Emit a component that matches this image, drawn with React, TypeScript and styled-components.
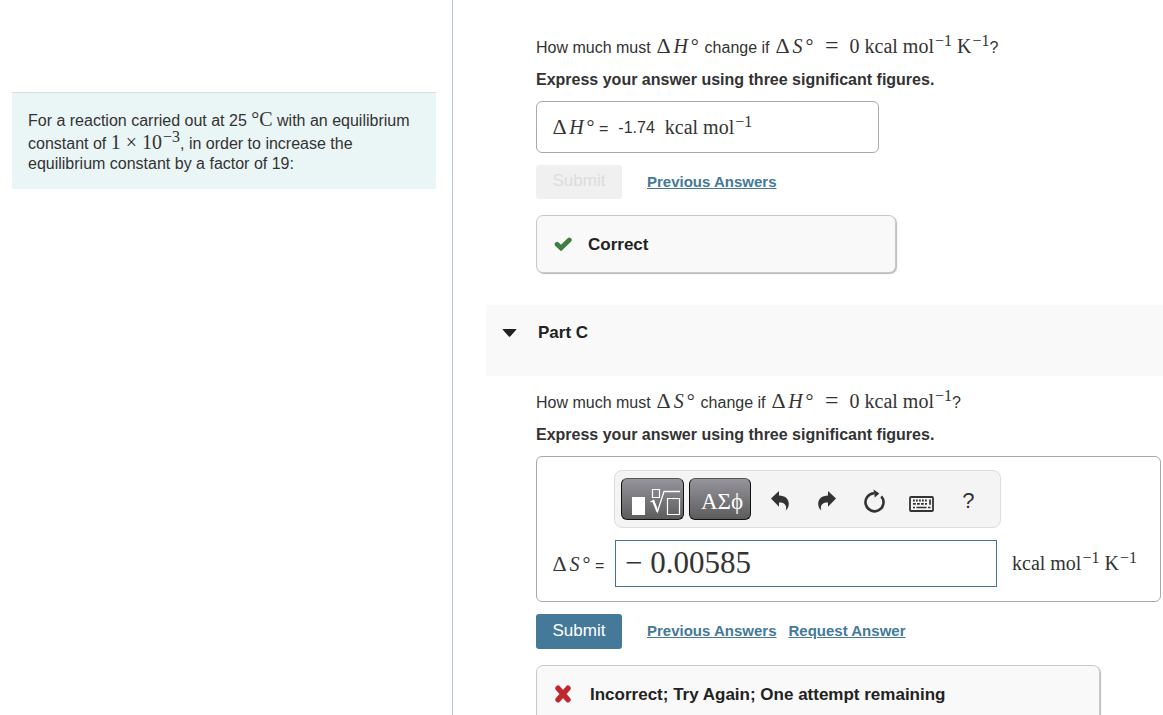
import React from "react";
import styled, { createGlobalStyle } from "styled-components";

const GlobalStyle = createGlobalStyle`
  *, *::before, *::after { box-sizing: border-box; }
  body {
    margin: 0;
    background: #fff;
    color: #333;
    font: 16px/19px "Liberation Sans", Arial, sans-serif;
  }
  p, h2 { margin: 0; }
`;

const serif = `"Liberation Serif", "Times New Roman", serif`;

const Page = styled.div`
  display: flex;
  height: 100vh;
  overflow: hidden;
`;

const ContextPane = styled.aside`
  flex: none;
  width: round(down, 39%, 1px);
  padding: 92px 16px 0 12px;
  border-right: 1px solid #b9cbe3;
`;

const ContextCard = styled.div`
  padding: 15px 16px 16px;
  border-top: 1px solid #d8dcdc;
  background: #eaf5f6;
`;

const WorkPane = styled.main`
  flex: 1;
  min-width: 0;
  padding-left: 33px;
  overflow-y: auto;
  scrollbar-width: none;
`;

const PartBody = styled.section<{ $top: number }>`
  padding: ${(p) => p.$top}px 2px 32px 50px;
`;

const Question = styled.p`
  line-height: 24px;
`;

const Instruction = styled.p`
  margin-top: 10px;
  font-weight: bold;
`;

const MathText = styled.span`
  font-family: ${serif};
  font-size: 20px;
  line-height: 23px;
  white-space: nowrap;
`;

const Symbol = styled.span<{ $width: number; $italic?: boolean }>`
  display: inline-block;
  width: ${(p) => p.$width}px;
  text-align: center;
  font-style: ${(p) => (p.$italic ? "italic" : "normal")};
`;

const Delta = styled(Symbol)`
  font-size: 22px;
`;

const Relation = styled.span`
  padding: 0 11px 0 10px;
  font-size: 24px;
  line-height: 0;
`;

const Power = styled.sup`
  padding-left: 1px;
  font-size: 16px;
  line-height: 0;
  vertical-align: 7px;
`;

const AnswerBox = styled.div`
  border: 1px solid #a9a9a9;
  border-radius: 6px;
  background: #fff;
`;

const GivenAnswer = styled(AnswerBox)`
  display: flex;
  align-items: center;
  max-width: 343px;
  height: 52px;
  margin-top: 12px;
  padding-left: 14px;
  gap: 10px;
`;

const Pair = styled.span`
  display: flex;
  align-items: baseline;
  gap: 3px;
`;

const EntryBox = styled(AnswerBox)`
  margin-top: 12px;
  padding: 13px 14px 14px;
`;

const Toolbar = styled.div`
  display: flex;
  align-items: center;
  width: 387px;
  height: 58px;
  margin-left: 63px;
  padding: 0 8px 0 6px;
  border: 1px solid #ddd;
  border-radius: 8px;
  background: #f4f4f4;
`;

const PaletteButton = styled.button<{ $width: number }>`
  display: flex;
  align-items: center;
  justify-content: flex-end;
  width: ${(p) => p.$width}px;
  height: 42px;
  margin-right: 5px;
  padding: 6px 2px 0 0;
  border: 1px solid #111;
  border-top-color: #555;
  border-radius: 6px;
  background: linear-gradient(#96949c, #5c5c5c);
  color: #fff;
  font: 23px/26px ${serif};
`;

const GreekButton = styled(PaletteButton)`
  padding-right: 7px;
`;

const ToolButton = styled.button`
  display: flex;
  align-items: center;
  justify-content: center;
  flex: 1 1 0;
  height: 42px;
  padding: 4px 0 0;
  border: 0;
  background: none;
  color: #333;
  font: 22px/24px "Liberation Sans", Arial, sans-serif;
`;

const EntryRow = styled.div`
  display: flex;
  align-items: center;
  margin-top: 12px;
`;

const EntryLabel = styled.label`
  display: flex;
  align-items: baseline;
  flex: none;
  width: 64px;
  gap: 3px;
`;

const EntryInput = styled.input`
  flex: 0 1 382px;
  min-width: 0;
  height: 47px;
  margin-right: 15px;
  padding: 0 9px 2px;
  border: 1px solid #3f7698;
  border-radius: 0;
  outline: 0;
  background: #fff;
  color: #333;
  font: 31px/36px ${serif};
`;

const Actions = styled.div`
  display: flex;
  align-items: center;
  gap: 12px;
  margin-top: 12px;
`;

const SubmitButton = styled.button`
  width: 86px;
  height: 35px;
  margin-right: 13px;
  padding: 0 0 2px;
  border: 0;
  border-radius: 3px;
  background: #457999;
  color: #fff;
  font: 17px/20px "Liberation Sans", Arial, sans-serif;
  &:disabled { height: 34px; background: #f0f0f0; color: #dcdcdc; }
`;

const ActionLink = styled.a`
  padding-bottom: 2px;
  color: #457999;
  font-size: 15px;
  font-weight: bold;
  text-decoration: underline;
`;

const Feedback = styled.div<{ $width: number }>`
  display: flex;
  align-items: center;
  max-width: ${(p) => p.$width}px;
  height: 58px;
  margin-top: 16px;
  padding-left: 17px;
  gap: 16px;
  border: 1px solid #c8c8c8;
  border-radius: 7px;
  background: #f9f9f9;
  box-shadow: 1px 1px 1px #bbb;
  color: #222;
  font-size: 17px;
  font-weight: bold;
`;

const PartHeader = styled.header`
  height: 71px;
  padding: 18px 16px;
  background: #f9f9f9;
`;

const PartToggle = styled.button`
  display: flex;
  align-items: center;
  gap: 21px;
  padding: 0;
  border: 0;
  background: none;
  color: #222;
  font: bold 17px/20px "Liberation Sans", Arial, sans-serif;
`;

const Quantity = ({ name }: { name: "H" | "S" }) => (
  <MathText>
    <Delta $width={17}>Δ</Delta>
    <Symbol $width={name === "H" ? 17 : 13} $italic>{name}</Symbol>
    <Symbol $width={11}>°</Symbol>
  </MathText>
);

const PerMole = ({ perKelvin }: { perKelvin?: boolean }) => (
  <MathText>
    kcal mol<Power>−1</Power>
    {perKelvin && <> K<Power>−1</Power></>}
  </MathText>
);

const CheckIcon = () => (
  <svg width="18" height="14" viewBox="0 0 18 14" aria-hidden="true">
    <path d="M3 7.300 7 11 15.300 3" fill="none" stroke="#3c7f40" strokeWidth="4.700" strokeLinecap="round" />
  </svg>
);

const CrossIcon = () => (
  <svg width="20" height="18" viewBox="0 0 20 18" aria-hidden="true">
    <path d="M4 3.200 14 14.800M14 3.200 4 14.800" stroke="#c1272d" strokeWidth="5.400" strokeLinecap="round" />
  </svg>
);

const CaretIcon = () => (
  <svg width="15" height="8" viewBox="0 0 15 8" aria-hidden="true">
    <path d="M1.2 0h12.6q1 0 .4.8L8.2 7.4q-.7.8-1.4 0L.8.8Q.2 0 1.2 0Z" fill="#222" />
  </svg>
);

const RootIcon = () => (
  <svg width="50" height="28" viewBox="0 0 50 28" aria-hidden="true">
    <path d="M1 9h13v18H1z" fill="#fff" />
    <path d="M21.500 1.500h7v8h-7zM36.500 10.500h12v16h-12z" fill="none" stroke="#fff" strokeWidth="1.200" />
    <path d="M19.500 14l3-1.500 4 11L33 3.500h16" fill="none" stroke="#fff" strokeWidth="1.300" />
    <path d="M22 12.500l4.500 11" stroke="#fff" strokeWidth="2.200" />
  </svg>
);

const UndoIcon = ({ flip }: { flip?: boolean }) => (
  <svg width="18" height="20" viewBox="0 0 18 20" aria-hidden="true">
    <path
      d="M8 0v4.600c6 .1 9.800 3.400 9.800 8.200 0 2.800-1 4.800-3.100 6.600 1.300-4.700-.4-7.900-6.700-7.900v4.300L0 7.600Z"
      fill="#333"
      transform={flip ? "matrix(-1 0 0 1 18 0)" : undefined}
    />
  </svg>
);

const ResetIcon = () => (
  <svg width="22" height="24" viewBox="0 0 22 24" aria-hidden="true">
    <path d="M18.300 7.400A9 9 0 1 1 11 4.300" fill="none" stroke="#333" strokeWidth="2.600" />
    <path d="M10.500.4 16.400 4.400 11.800 8.600Z" fill="#333" />
  </svg>
);

const KeyboardIcon = () => (
  <svg width="25" height="22" viewBox="0 -6 25 22" aria-hidden="true">
    <rect x="1" y="1" width="23" height="14" rx="1" fill="none" stroke="#333" strokeWidth="1.800" />
    <path d="M4 4.500h15" stroke="#333" strokeWidth="1.800" strokeDasharray="1.800 1.200" />
    <path d="M4 7.800h14" stroke="#333" strokeWidth="1.800" strokeDasharray="2.800 1.200" />
    <path d="M21 3.600v5.200M4 11.500h2M7.500 11.500h10M19 11.500h2.500" fill="none" stroke="#333" strokeWidth="1.700" />
  </svg>
);

export default function App() {
  return (
    <>
      <GlobalStyle />
      <Page>
        <ContextPane>
          <ContextCard>
            <p>
              For a reaction carried out at 25 <MathText>°C</MathText> with an equilibrium
              constant of <MathText>1 × 10<Power>−3</Power></MathText>, in order to increase the
              equilibrium constant by a factor of 19:
            </p>
          </ContextCard>
        </ContextPane>
        <WorkPane>
          <PartBody $top={34}>
            <Question>
              How much must <Quantity name="H" /> change if <Quantity name="S" />
              <MathText><Relation>=</Relation>0 </MathText><PerMole perKelvin />?
            </Question>
            <Instruction>Express your answer using three significant figures.</Instruction>
            <GivenAnswer>
              <Pair><Quantity name="H" /> =</Pair>
              <Pair>-1.74</Pair>
              <PerMole />
            </GivenAnswer>
            <Actions>
              <SubmitButton disabled>Submit</SubmitButton>
              <ActionLink href="#previous-b">Previous Answers</ActionLink>
            </Actions>
            <Feedback $width={360}><CheckIcon />Correct</Feedback>
          </PartBody>
          <PartHeader>
            <h2>
              <PartToggle aria-expanded="true"><CaretIcon />Part C</PartToggle>
            </h2>
          </PartHeader>
          <PartBody $top={13}>
            <Question>
              How much must <Quantity name="S" /> change if <Quantity name="H" />
              <MathText><Relation>=</Relation>0 </MathText><PerMole />?
            </Question>
            <Instruction>Express your answer using three significant figures.</Instruction>
            <EntryBox>
              <Toolbar role="toolbar" aria-label="Equation tools">
                <PaletteButton $width={63} aria-label="Templates"><RootIcon /></PaletteButton>
                <GreekButton $width={62}>ΑΣϕ</GreekButton>
                <ToolButton aria-label="Undo"><UndoIcon /></ToolButton>
                <ToolButton aria-label="Redo"><UndoIcon flip /></ToolButton>
                <ToolButton aria-label="Reset"><ResetIcon /></ToolButton>
                <ToolButton aria-label="Keyboard shortcuts"><KeyboardIcon /></ToolButton>
                <ToolButton>?</ToolButton>
              </Toolbar>
              <EntryRow>
                <EntryLabel htmlFor="answer"><Quantity name="S" /> =</EntryLabel>
                <EntryInput id="answer" defaultValue="− 0.00585" />
                <PerMole perKelvin />
              </EntryRow>
            </EntryBox>
            <Actions>
              <SubmitButton>Submit</SubmitButton>
              <ActionLink href="#previous-c">Previous Answers</ActionLink>
              <ActionLink href="#request-c">Request Answer</ActionLink>
            </Actions>
            <Feedback $width={564}><CrossIcon />Incorrect; Try Again; One attempt remaining</Feedback>
          </PartBody>
        </WorkPane>
      </Page>
    </>
  );
}
